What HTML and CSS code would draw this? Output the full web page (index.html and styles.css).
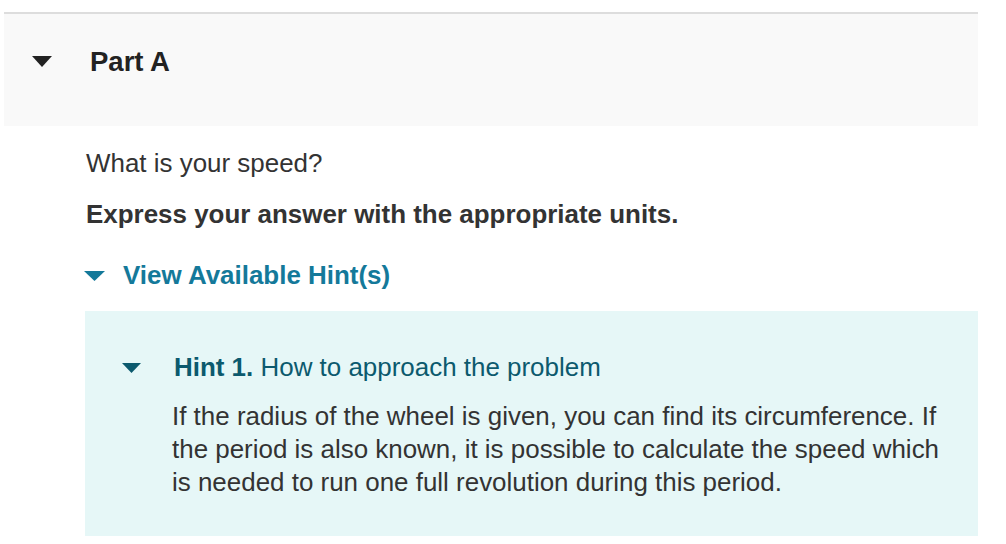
FILE: index.html
```html
<!DOCTYPE html>
<html lang="en">
<head>
<meta charset="utf-8">
<title>Part A</title>
<link rel="stylesheet" href="styles.css">
</head>
<body>
<div class="part">
  <div class="part-header">
    <svg class="caret caret-dark" viewBox="0 0 20 11" width="20" height="11"><polygon points="0,0 20,0 10,11" fill="currentColor"/></svg>
    <h2 class="part-title">Part A</h2>
  </div>
  <div class="part-body">
    <p class="question">What is your speed?</p>
    <p class="instruction">Express your answer with the appropriate units.</p>
    <div class="hints-toggle">
      <svg class="caret" viewBox="0 0 21 10" width="21" height="10"><polygon points="0,0 21,0 10.5,10" fill="currentColor"/></svg>
      <span class="hints-label">View Available Hint(s)</span>
    </div>
    <div class="hint-box">
      <div class="hint-title">
        <svg class="caret" viewBox="0 0 19 10" width="19" height="10"><polygon points="0,0 19,0 9.5,10" fill="currentColor"/></svg>
        <span class="hint-text"><b>Hint 1.</b> How to approach the problem</span>
      </div>
      <p class="hint-body">If the radius of the wheel is given, you can find its circumference. If the period is also known, it is possible to calculate the speed which is needed to run one full revolution during this period.</p>
    </div>
  </div>
</div>
</body>
</html>
```
FILE: styles.css
```css
html, body {
  margin: 0;
  padding: 0;
  background: #ffffff;
}
body {
  font-family: "Liberation Sans", Arial, Helvetica, sans-serif;
  font-size: 25.95px;
  color: #333333;
}
.part {
  margin: 12px 28px 0 4px;
  border-top: 2px solid #dddddd;
}
.part-header {
  background: #f9f9f9;
  height: 112px;
  display: flex;
  align-items: flex-start;
  box-sizing: border-box;
  padding-top: 31px;
}
.caret {
  display: block;
  flex: none;
}
.caret-dark {
  color: #222222;
  margin: 11px 0 0 28px;
}
.part-title {
  margin: 0 0 0 38px;
  font-size: 27.5px;
  line-height: 33px;
  font-weight: bold;
  color: #222222;
}
.part-body {
  padding-left: 82px;
}
.question {
  margin: 21px 0 0 0;
  line-height: 33px;
}
.instruction {
  margin: 18px 0 0 0;
  line-height: 33px;
  font-weight: bold;
}
.hints-toggle {
  margin-top: 28px;
  display: flex;
  align-items: center;
  color: #14799a;
  font-weight: bold;
  line-height: 33px;
}
.hints-toggle .caret {
  margin: 0 18px 0 -2px;
}
.hint-box {
  margin: 19px 0 0 -1px;
  background: #e6f7f7;
  padding: 40px 0 37px 37px;
}
.hint-title {
  display: flex;
  align-items: center;
  color: #0c5a6e;
  line-height: 33px;
}
.hint-title .caret {
  margin-right: 33px;
}
.hint-text b {
  font-weight: bold;
}
.hint-body {
  margin: 16px 20px 0 50px;
  line-height: 33px;
  color: #333333;
}
```
